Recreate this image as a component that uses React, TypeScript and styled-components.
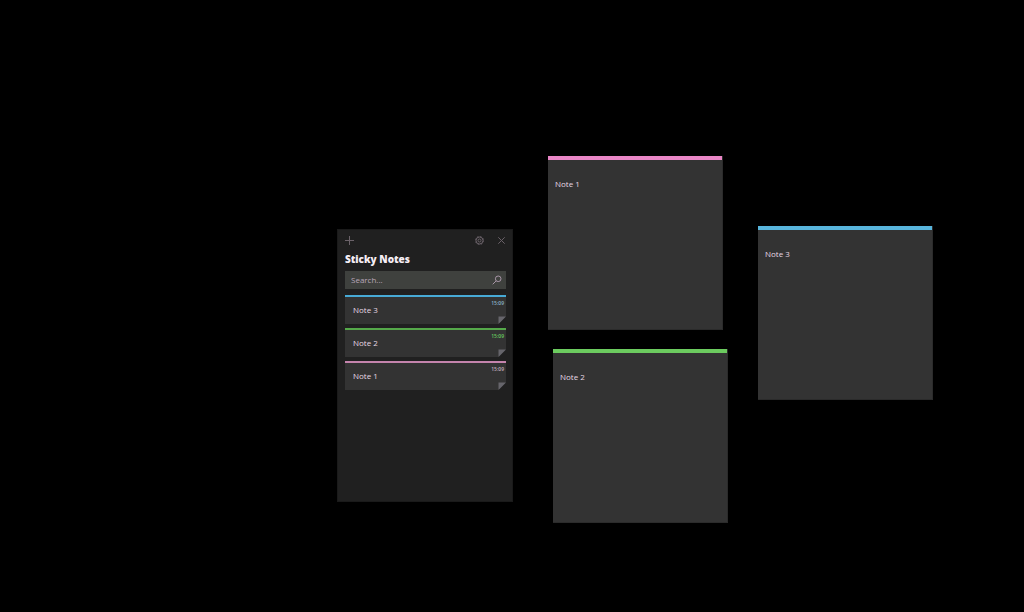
import React, { useState } from "react";
import styled, { createGlobalStyle } from "styled-components";

const GlobalStyle = createGlobalStyle`
  * { box-sizing: border-box; }
  html, body { margin: 0; background: #000; }
  body { font-family: "Open Sans", "Noto Sans", sans-serif; color: #e6d8e4; }
`;

const Desktop = styled.main`
  position: relative;
  min-height: 100vh;
  overflow: hidden;
  background: #000;
`;

const ListWindow = styled.section`
  position: absolute;
  left: 337px;
  top: 229px;
  width: 176px;
  min-height: 273px;
  padding: 0 6px 8px 7px;
  background: #202020;
  border: 1px solid #1a1a1a;
`;

const TitleBar = styled.header`
  display: flex;
  align-items: center;
  gap: 14px;
  height: 20px;
  padding-right: 1px;
`;

const IconButton = styled.button<{ $first?: boolean }>`
  display: flex;
  margin: 0 ${(p) => (p.$first ? "auto" : "0")} 0 0;
  padding: 0;
  border: 0;
  background: none;
  color: #6b6269;
`;

const Title = styled.h1`
  margin: 1px 0 4px;
  font-size: 10px;
  line-height: 16px;
  font-weight: 800;
  color: #f6eef5;
`;

const SearchBox = styled.label`
  display: flex;
  align-items: center;
  height: 18px;
  padding: 0 4px 0 6px;
  background: #3f413e;
  color: #a795a6;
`;

const SearchInput = styled.input`
  flex: 1;
  min-width: 0;
  padding: 0;
  border: 0;
  outline: 0;
  background: none;
  font: inherit;
  font-size: 8px;
  line-height: 12px;
  color: #e6d8e4;
  &::placeholder { color: #b9a6b9; opacity: 1; }
`;

const NoteList = styled.ul`
  display: flex;
  flex-direction: column;
  gap: 4px;
  margin: 6px 0 0;
  padding: 0;
  list-style: none;
`;

const NoteCard = styled.li<{ $color: string }>`
  position: relative;
  display: flex;
  justify-content: space-between;
  height: 29px;
  padding: 0 2px 0 8px;
  background: #333;
  border-top: 2px solid ${(p) => p.$color};
`;

const NoteName = styled.span`
  padding-top: 7px;
  font-size: 8px;
  line-height: 12px;
`;

const NoteTime = styled.time<{ $color: string }>`
  padding-top: 2px;
  font-size: 5px;
  line-height: 8px;
  font-weight: 600;
  color: ${(p) => p.$color};
`;

const Fold = styled.svg`
  position: absolute;
  right: 0;
  bottom: 0;
`;

const NoteWindow = styled.article<{ $x: number; $y: number; $color: string }>`
  position: absolute;
  left: ${(p) => p.$x}px;
  top: ${(p) => p.$y}px;
  width: 175px;
  min-height: 174px;
  padding: 17px 7px;
  background: #333;
  border: solid #2b2b2b;
  border-width: 0 1px 1px 0;
  box-shadow: inset 0 4px ${(p) => p.$color};
  font-size: 8px;
  line-height: 22px;
`;

const notes = [
  { name: "Note 3", color: "#47aad6", time: "#8bb4c8", x: 758, y: 226 },
  { name: "Note 2", color: "#55a94a", time: "#68cc5f", x: 553, y: 349 },
  { name: "Note 1", color: "#c584ad", time: "#c4afbe", x: 548, y: 156 },
];

const windowColors: Record<string, string> = {
  "Note 1": "#e986c6",
  "Note 2": "#6ccb5f",
  "Note 3": "#58b5dc",
};

export default function App() {
  const [query, setQuery] = useState("");
  const shown = notes.filter((n) => n.name.toLowerCase().includes(query.toLowerCase()));
  return (
    <>
      <GlobalStyle />
      <Desktop>
        <ListWindow>
          <TitleBar>
            <IconButton $first aria-label="New note">
              <svg width="9" height="9" viewBox="0 0 9 9" stroke="currentColor">
                <path d="M4.5 0v9M0 4.5h9" />
              </svg>
            </IconButton>
            <IconButton aria-label="Settings">
              <svg width="9" height="9" viewBox="0 0 9 9" fill="none" stroke="currentColor">
                <circle cx="4.5" cy="4.5" r="3.5" strokeWidth="1" />
                <circle cx="4.5" cy="4.5" r="4.1" strokeWidth="0.8" strokeDasharray="1.7 1.52" />
                <circle cx="4.5" cy="4.5" r="1.5" strokeWidth="1" />
              </svg>
            </IconButton>
            <IconButton aria-label="Close">
              <svg width="7" height="7" viewBox="0 0 7 7" stroke="currentColor">
                <path d="M0.3 0.3l6.4 6.4M6.7 0.3L0.3 6.7" />
              </svg>
            </IconButton>
          </TitleBar>
          <Title>Sticky Notes</Title>
          <SearchBox>
            <SearchInput
              aria-label="Search notes"
              placeholder="Search..."
              value={query}
              onChange={(e) => setQuery(e.target.value)}
            />
            <svg width="10" height="10" viewBox="0 0 10 10" fill="none" stroke="currentColor" aria-hidden="true">
              <circle cx="6.2" cy="3.8" r="2.8" />
              <path d="M4.2 5.8L0.7 9.3" />
            </svg>
          </SearchBox>
          <NoteList>
            {shown.map((n) => (
              <NoteCard key={n.name} $color={n.color}>
                <NoteName>{n.name}</NoteName>
                <NoteTime $color={n.time}>15:09</NoteTime>
                <Fold width="8" height="8" viewBox="0 0 8 8" aria-hidden="true">
                  <path d="M8 0v8H0z" fill="#202020" />
                  <path d="M0.5 0.5h7.5L0.5 8z" fill="#66656b" />
                </Fold>
              </NoteCard>
            ))}
          </NoteList>
        </ListWindow>
        {notes.map((n) => (
          <NoteWindow key={n.name} $x={n.x} $y={n.y} $color={windowColors[n.name]}>
            {n.name}
          </NoteWindow>
        ))}
      </Desktop>
    </>
  );
}
